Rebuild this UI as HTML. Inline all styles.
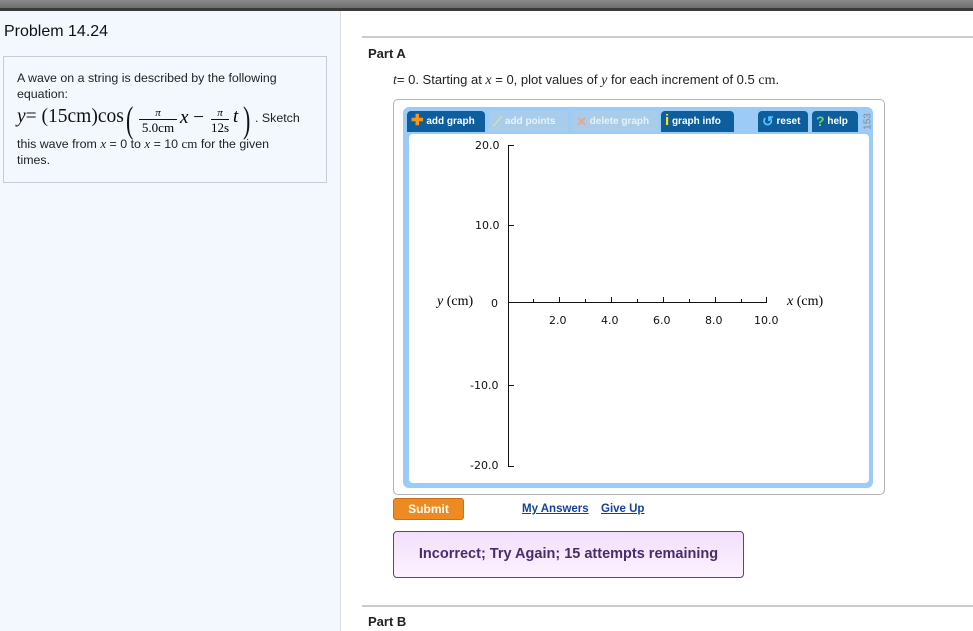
<!DOCTYPE html>
<html><head><meta charset="utf-8"><style>
body{margin:0;width:973px;height:631px;overflow:hidden;background:#fff;font-family:"Liberation Sans",Arial,sans-serif;position:relative}
.a{position:absolute}
.m{font-family:"Liberation Serif",serif;font-style:italic}
.btn{position:absolute;top:111px;height:21px;border-radius:4px 4px 0 0;background:#0d5e9c;color:#fff;font-size:10px;font-weight:bold;line-height:21px;box-sizing:border-box;padding-left:4px;white-space:nowrap}
.btn span{display:inline-block;vertical-align:top}
.dis{background:#a9cde8;color:#e6f2fb}
.ax{font-family:"DejaVu Sans",sans-serif;font-size:11px;color:#111}
.p{position:absolute;font-family:"Liberation Serif",serif;font-size:22px;transform:scaleY(1.7);transform-origin:top left;color:#111}
</style></head><body>
<div class="a" style="left:0;top:0;width:973px;height:8px;background:linear-gradient(#8a8a8a,#6e6e6e)"></div>
<div class="a" style="left:0;top:8px;width:973px;height:3px;background:#3a3a3a"></div>
<div class="a" style="left:0;top:11px;width:340px;height:620px;background:#f3f8fe"></div>
<div class="a" style="left:340px;top:11px;width:1px;height:620px;background:#d8dde5"></div>
<div class="a" style="left:4px;top:23px;font-size:16px;color:#111">Problem 14.24</div>
<div class="a" style="left:3px;top:56px;width:322px;height:125px;border:1px solid #c3ccd8;background:#f3f8fe"></div>
<div class="a" style="left:17px;top:70px;font-size:12.4px;color:#222;line-height:16px;width:300px">A wave on a string is described by the following equation:</div>
<div class="a" style="left:17px;top:106px;font-size:19.5px;color:#111;font-family:'Liberation Serif',serif;white-space:nowrap"><i>y</i>= (15cm)cos</div>
<div class="p" style="left:126px;top:98px">(</div>
<div class="a" style="left:139px;top:107px;font-size:11px;font-family:'Liberation Serif',serif;text-align:center;width:38px;line-height:12px"><i>π</i><div style="border-top:1px solid #111;font-size:13px;line-height:15px">5.0cm</div></div>
<div class="a m" style="left:180px;top:107px;font-size:19px;white-space:nowrap">x <span style="font-style:normal">−</span></div>
<div class="a" style="left:211px;top:107px;font-size:11px;font-family:'Liberation Serif',serif;text-align:center;width:18px;line-height:12px"><i>π</i><div style="border-top:1px solid #111;font-size:13px;line-height:15px">12s</div></div>
<div class="a m" style="left:233px;top:106px;font-size:19px">t</div>
<div class="p" style="left:243px;top:98px">)</div>
<div class="a" style="left:255px;top:111px;font-size:12.4px;color:#222">. Sketch</div>
<div class="a" style="left:17px;top:136px;font-size:12.4px;color:#222;line-height:16px;width:285px">this wave from <span class="m" style="font-size:13px">x</span> = 0 to <span class="m" style="font-size:13px">x</span> = 10 <span style="font-family:'Liberation Serif',serif;font-size:13px">cm</span> for the given times.</div>

<div class="a" style="left:362px;top:36px;width:611px;height:2px;background:#ccc"></div>
<div class="a" style="left:368px;top:46px;font-size:13px;font-weight:bold;color:#222">Part A</div>
<div class="a" style="left:393px;top:72px;font-size:13px;color:#222;white-space:nowrap"><span class="m" style="font-size:14px">t</span>= 0. Starting at <span class="m" style="font-size:14px">x</span> = 0, plot values of <span class="m" style="font-size:14px">y</span> for each increment of 0.5 <span style="font-family:'Liberation Serif',serif;font-size:14px">cm</span>.</div>

<div class="a" style="left:393px;top:99px;width:492px;height:396px;border:1px solid #b3b3b3;border-radius:5px;box-sizing:border-box"></div>
<div class="a" style="left:403px;top:107px;width:470px;height:381px;background:#9ccbf7;border-radius:6px"></div>
<div class="a" style="left:409px;top:134px;width:460px;height:349px;background:#fff;border-radius:4px"></div>
<div class="btn" style="left:407px;width:78px"><span style="color:#f7941d;font-size:15px;line-height:20px">✚</span> add graph</div>
<div class="btn dis" style="left:489px;width:79px"><span style="color:#cfe8a0;font-size:13px">⟋</span> add points</div>
<div class="btn dis" style="left:572px;width:86px"><span style="color:#f4a08a;font-size:13px">✕</span> delete graph</div>
<div class="btn" style="left:661px;width:73px"><span style="color:#ffe600;font-size:15px;line-height:20px">i</span> graph info</div>
<div class="btn" style="left:758px;width:50px"><span style="color:#5fc0ff;font-size:14px;line-height:20px">↺</span> reset</div>
<div class="btn" style="left:812px;width:46px"><span style="color:#6cd46c;font-size:14px;line-height:20px">?</span> help</div>
<div class="a" style="left:858px;top:116px;font-size:10px;color:#888;transform:rotate(-90deg);width:20px;text-align:center">153</div>

<svg class="a" style="left:0;top:0" width="973" height="631">
<g stroke="#111" stroke-width="1" fill="none">
<path d="M508.5 145V467M508.5 145.5H514M508.5 466.5H514M508.5 225.5H514M508.5 385.5H514M508 302.5H767"/>
<path d="M533.5 302V299M559.5 302V297M585.5 302V299M611.5 302V297M637.5 302V299M663.5 302V297M689.5 302V299M715.5 302V297M741.5 302V299M766.5 302V297"/>
</g></svg>
<div class="a ax" style="left:475px;top:139px">20.0</div>
<div class="a ax" style="left:475px;top:219px">10.0</div>
<div class="a ax" style="left:491px;top:297px">0</div>
<div class="a ax" style="left:470px;top:379px">-10.0</div>
<div class="a ax" style="left:470px;top:459px">-20.0</div>
<div class="a ax" style="left:549px;top:314px">2.0</div>
<div class="a ax" style="left:601px;top:314px">4.0</div>
<div class="a ax" style="left:653px;top:314px">6.0</div>
<div class="a ax" style="left:705px;top:314px">8.0</div>
<div class="a ax" style="left:754px;top:314px">10.0</div>
<div class="a" style="left:437px;top:294px;font-size:14px;font-family:'Liberation Serif',serif"><i>y</i> (cm)</div>
<div class="a" style="left:787px;top:294px;font-size:14px;font-family:'Liberation Serif',serif"><i>x</i> (cm)</div>

<div class="a" style="left:393px;top:498px;width:71px;height:22px;background:#ee8a22;border:1px solid #c8701a;border-radius:3px;box-sizing:border-box;color:#fff;font-weight:bold;font-size:12px;text-align:center;line-height:20px">Submit</div>
<div class="a" style="left:522px;top:503px;font-size:11.5px;font-weight:bold;color:#13419b;text-decoration:underline">My Answers</div>
<div class="a" style="left:601px;top:503px;font-size:11.5px;font-weight:bold;color:#13419b;text-decoration:underline">Give Up</div>
<div class="a" style="left:393px;top:531px;width:351px;height:47px;border:1px solid #6a3a8a;border-radius:4px;box-sizing:border-box;background:linear-gradient(#f2dffb,#fdf2ff);color:#4a2c6a;font-weight:bold;font-size:14.5px;text-align:center;line-height:45px">Incorrect; Try Again; 15 attempts remaining</div>
<div class="a" style="left:362px;top:605px;width:611px;height:2px;background:#ccc"></div>
<div class="a" style="left:368px;top:614px;font-size:13px;font-weight:bold;color:#222">Part B</div>
</body></html>
